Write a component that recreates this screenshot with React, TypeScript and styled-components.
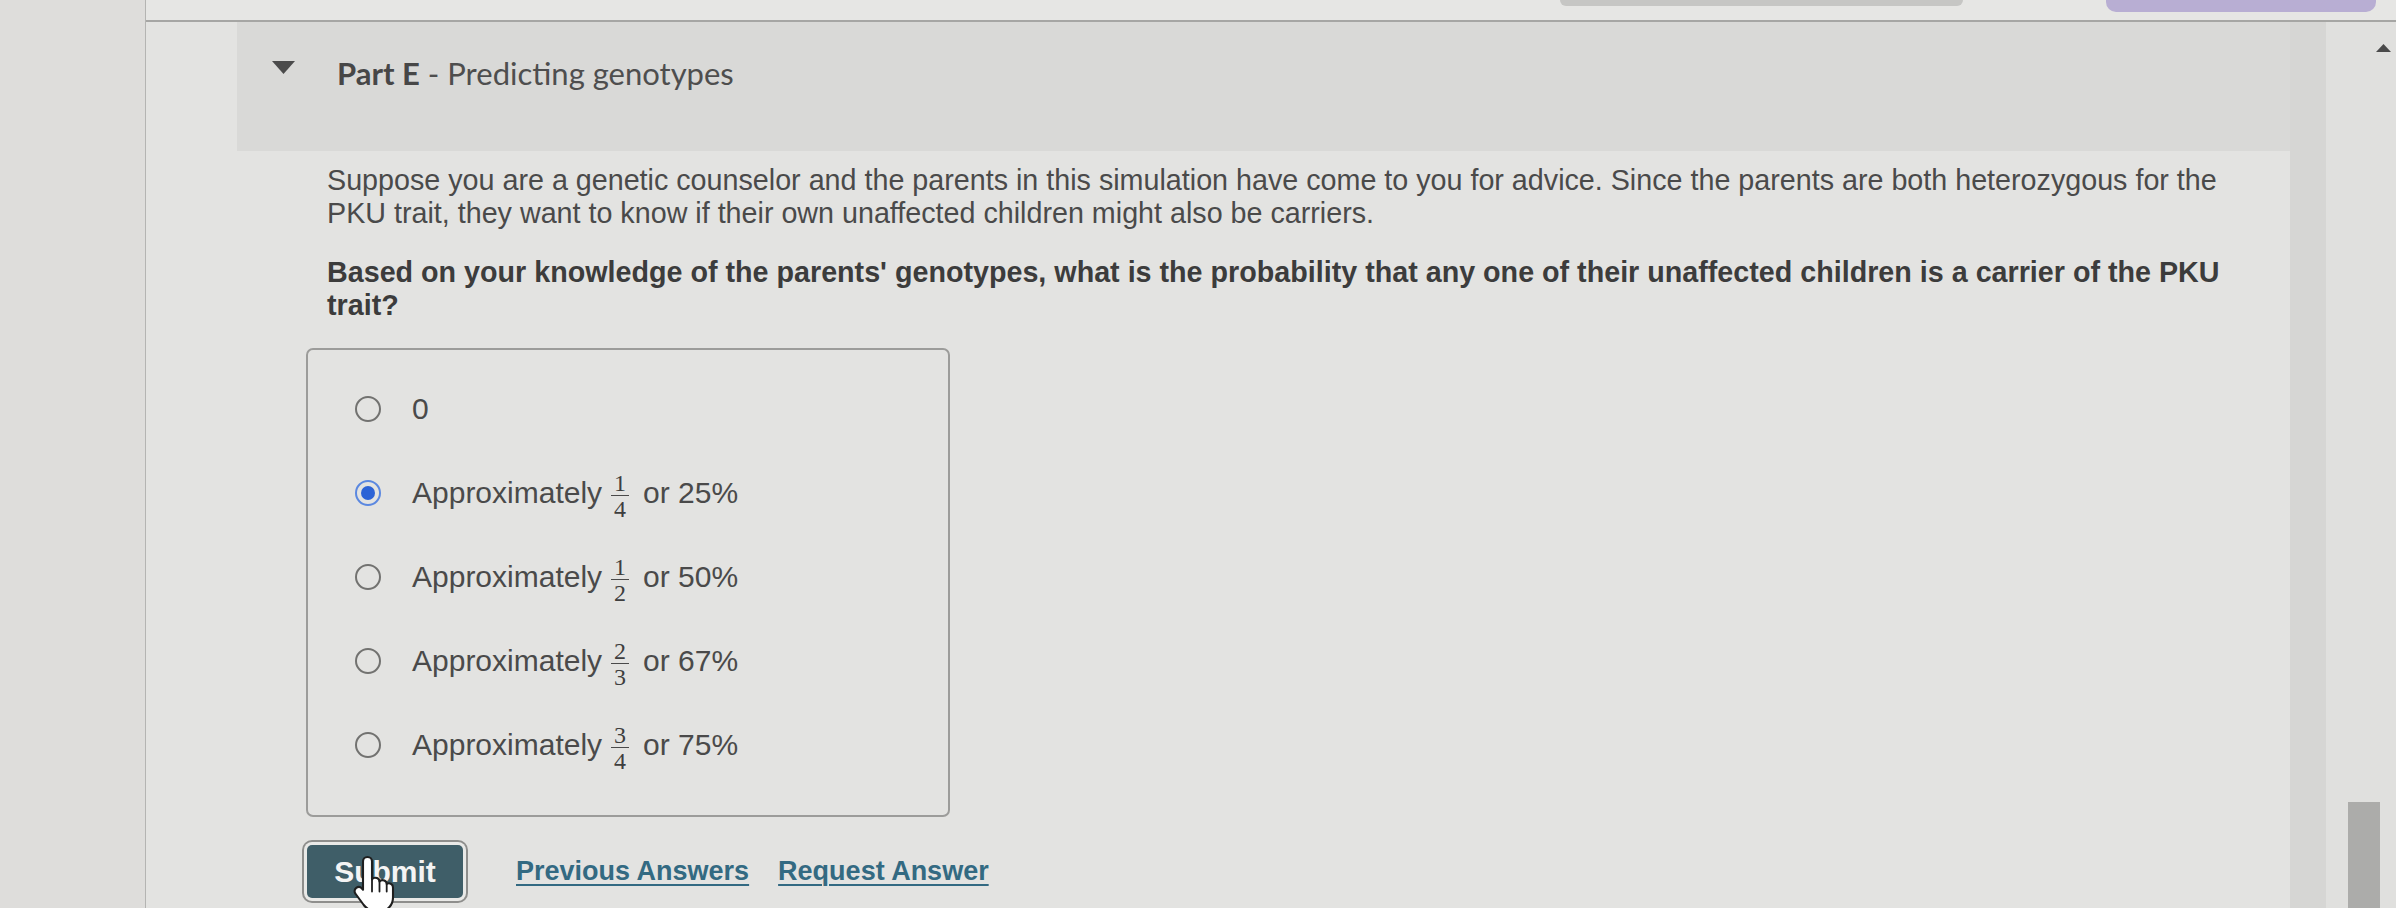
import React from "react";
import styled, { createGlobalStyle } from "styled-components";

const GlobalStyle = createGlobalStyle`
  html, body {
    margin: 0;
    padding: 0;
    background: #e3e3e1;
    overflow: hidden;
  }
  * {
    box-sizing: border-box;
  }
`;

// page frame
const Page = styled.div`
  width: 2396px;
  height: 908px;
  display: flex;
  flex-direction: row;
  background: #e3e3e1;
  font-family: "Liberation Sans", Arial, sans-serif;
`;

const LeftRail = styled.div`
  width: 146px;
  flex: none;
  background: #dedddb;
  border-right: 1px solid #b4b4b2;
`;

const RightArea = styled.div`
  flex: 1;
  display: flex;
  flex-direction: column;
  min-width: 0;
`;

const TopBar = styled.div`
  height: 22px;
  flex: none;
  display: flex;
  flex-direction: row;
  justify-content: flex-end;
  align-items: flex-start;
  background: #e6e6e4;
  border-bottom: 2px solid #a6a6a4;
  padding-right: 20px;
`;

const TopTab = styled.div<{ $w: number; $h: number; $color: string }>`
  width: ${(p) => p.$w}px;
  height: ${(p) => p.$h}px;
  background: ${(p) => p.$color};
  border-radius: 0 0 10px 10px;
  & + & {
    margin-left: 143px;
  }
`;

const ContentRow = styled.div`
  flex: 1;
  display: flex;
  flex-direction: row;
  min-height: 0;
`;

const Main = styled.div`
  flex: 1;
  display: flex;
  flex-direction: column;
`;

// collapsible part header
const PartHeader = styled.div`
  margin-left: 91px;
  height: 129px;
  background: #d9d9d7;
  display: flex;
  flex-direction: row;
  align-items: flex-start;
  padding: 33px 0 0 35px;
`;

const Caret = styled.svg`
  width: 23px;
  height: 13px;
  margin-top: 6px;
  flex: none;
`;

const PartTitle = styled.h2`
  margin: 0 0 0 42px;
  font-family: Lato, "Open Sans", sans-serif;
  font-size: 31px;
  line-height: 36px;
  font-weight: 400;
  color: #4e4e4e;
  b {
    font-weight: 700;
    color: #474747;
  }
`;

const Body = styled.div`
  padding: 13px 0 0 160px;
  display: flex;
  flex-direction: column;
  align-items: flex-start;
`;

const Paragraph = styled.p<{ $bold?: boolean }>`
  margin: 0 0 26px 21px;
  width: 1945px;
  font-size: 28.7px;
  line-height: 33px;
  font-weight: ${(p) => (p.$bold ? 700 : 400)};
  color: ${(p) => (p.$bold ? "#3c3c3c" : "#4a4a4a")};
`;

const ChoiceBox = styled.div`
  width: 644px;
  height: 469px;
  border: 2px solid #9c9c9a;
  border-radius: 7px;
  padding: 17px 0 28px 47px;
  display: flex;
  flex-direction: column;
`;

const Choice = styled.label`
  height: 84px;
  display: flex;
  flex-direction: row;
  align-items: center;
  font-size: 30px;
  color: #4a4a4a;
  cursor: pointer;
`;

const Radio = styled.span<{ $checked?: boolean }>`
  width: 26px;
  height: 26px;
  flex: none;
  border-radius: 50%;
  border: 2.5px solid ${(p) => (p.$checked ? "#5b88e0" : "#727270")};
  display: flex;
  align-items: center;
  justify-content: center;
  margin-right: 31px;
  &::after {
    content: "";
    display: ${(p) => (p.$checked ? "block" : "none")};
    width: 14px;
    height: 14px;
    border-radius: 50%;
    background: #2c63d6;
  }
`;

const Frac = styled.span`
  display: inline-flex;
  flex-direction: column;
  align-items: center;
  margin: 6px 14px 0 9px;
  font-family: "Liberation Serif", "Times New Roman", serif;
  font-size: 24px;
  line-height: 22px;
  color: #3e3e3e;
`;

const FracTop = styled.span`
  padding: 0 3px 1px;
  border-bottom: 1.5px solid #4a4a4a;
`;

const FracBottom = styled.span`
  padding-top: 2px;
`;

const ActionRow = styled.div`
  margin-top: 28px;
  margin-left: 1px;
  display: flex;
  flex-direction: row;
  align-items: center;
`;

const SubmitButton = styled.button`
  position: relative;
  width: 156px;
  height: 53px;
  border: none;
  border-radius: 5px;
  background: #3f5e68;
  color: #f4f4f4;
  font-family: "Liberation Sans", Arial, sans-serif;
  font-size: 30px;
  font-weight: 700;
  box-shadow: 0 0 0 3px #e9e9e7, 0 0 0 5px #8e8e8c;
  cursor: pointer;
`;

const HandCursor = styled.svg`
  position: absolute;
  left: 44px;
  top: 9px;
  width: 48px;
  height: 60px;
`;

const ActionLink = styled.a`
  font-size: 27px;
  font-weight: 700;
  color: #336a82;
  text-decoration: underline;
  text-underline-offset: 4px;
  text-decoration-thickness: 2px;
  cursor: pointer;
  margin-left: 29px;
  &:first-of-type {
    margin-left: 53px;
  }
`;

// right scrollbar column
const ScrollColumn = styled.div`
  width: 106px;
  flex: none;
  display: flex;
  flex-direction: row;
`;

const ScrollShade = styled.div`
  width: 36px;
  background: #d6d6d4;
`;

const ScrollTrack = styled.div`
  flex: 1;
  background: #e0e0de;
  display: flex;
  flex-direction: column;
  justify-content: space-between;
  padding: 22px 0 0 22px;
`;

const ScrollArrow = styled.svg`
  width: 15px;
  height: 8px;
  margin-left: 28px;
`;

const ScrollThumb = styled.div`
  width: 32px;
  height: 106px;
  background: #acacaa;
`;

const choices = [
  { label: "0" },
  { label: "Approximately", num: 1, den: 4, pct: "25%", checked: true },
  { label: "Approximately", num: 1, den: 2, pct: "50%" },
  { label: "Approximately", num: 2, den: 3, pct: "67%" },
  { label: "Approximately", num: 3, den: 4, pct: "75%" },
];

const App: React.FC = () => {
  return (
    <>
      <GlobalStyle />
      <Page>
        <LeftRail />
        <RightArea>
          <TopBar>
            <TopTab $w={403} $h={6} $color="#c6c6c4" />
            <TopTab $w={270} $h={12} $color="#b8aed3" />
          </TopBar>
          <ContentRow>
            <Main>
              <PartHeader>
                <Caret viewBox="0 0 23 13">
                  <polygon points="0,0 23,0 11.5,13" fill="#4b4b4b" />
                </Caret>
                <PartTitle>
                  <b>Part E</b> - Predicting genotypes
                </PartTitle>
              </PartHeader>

              <Body>
                <Paragraph>
                  Suppose you are a genetic counselor and the parents in this
                  simulation have come to you for advice. Since the parents are
                  both heterozygous for the PKU trait, they want to know if
                  their own unaffected children might also be carriers.
                </Paragraph>
                <Paragraph $bold>
                  Based on your knowledge of the parents' genotypes, what is the
                  probability that any one of their unaffected children is a
                  carrier of the PKU trait?
                </Paragraph>

                <ChoiceBox>
                  {choices.map((c, i) => (
                    <Choice key={i}>
                      <Radio $checked={c.checked} />
                      {c.label}
                      {c.num !== undefined && (
                        <>
                          <Frac>
                            <FracTop>{c.num}</FracTop>
                            <FracBottom>{c.den}</FracBottom>
                          </Frac>
                          or {c.pct}
                        </>
                      )}
                    </Choice>
                  ))}
                </ChoiceBox>

                <ActionRow>
                  <SubmitButton>
                    Submit
                    <HandCursor viewBox="0 0 32 40">
                      <path
                        d="M11 2 C12.7 2 14 3.3 14 5 V17 C14.5 16 16 15.5 17.3 16 C18.3 16.4 19 17.3 19 18.3 C19.6 17.6 21 17.2 22.2 17.7 C23.2 18.1 23.8 19 23.8 20 C24.5 19.5 25.8 19.4 26.8 20 C27.7 20.5 28 21.5 28 22.5 V29 C28 34 24.5 38 19.5 38 H16 C12.5 38 10.5 36.5 8.5 34 L3 26.5 C2 25.2 2.3 23.5 3.5 22.6 C4.7 21.7 6.3 21.9 7.3 23 L8 23.8 V5 C8 3.3 9.3 2 11 2 Z"
                        fill="#ffffff"
                        stroke="#1e1e1e"
                        strokeWidth="1.4"
                        strokeLinejoin="round"
                      />
                      <path
                        d="M14 17 V25 M19 18.3 V25 M23.8 20 V25"
                        stroke="#1e1e1e"
                        strokeWidth="1.2"
                        strokeLinecap="round"
                      />
                    </HandCursor>
                  </SubmitButton>
                  <ActionLink>Previous Answers</ActionLink>
                  <ActionLink>Request Answer</ActionLink>
                </ActionRow>
              </Body>
            </Main>

            <ScrollColumn>
              <ScrollShade />
              <ScrollTrack>
                <ScrollArrow viewBox="0 0 15 8">
                  <polygon points="7.5,0 15,8 0,8" fill="#4a4a4a" />
                </ScrollArrow>
                <ScrollThumb />
              </ScrollTrack>
            </ScrollColumn>
          </ContentRow>
        </RightArea>
      </Page>
    </>
  );
};

export default App;
